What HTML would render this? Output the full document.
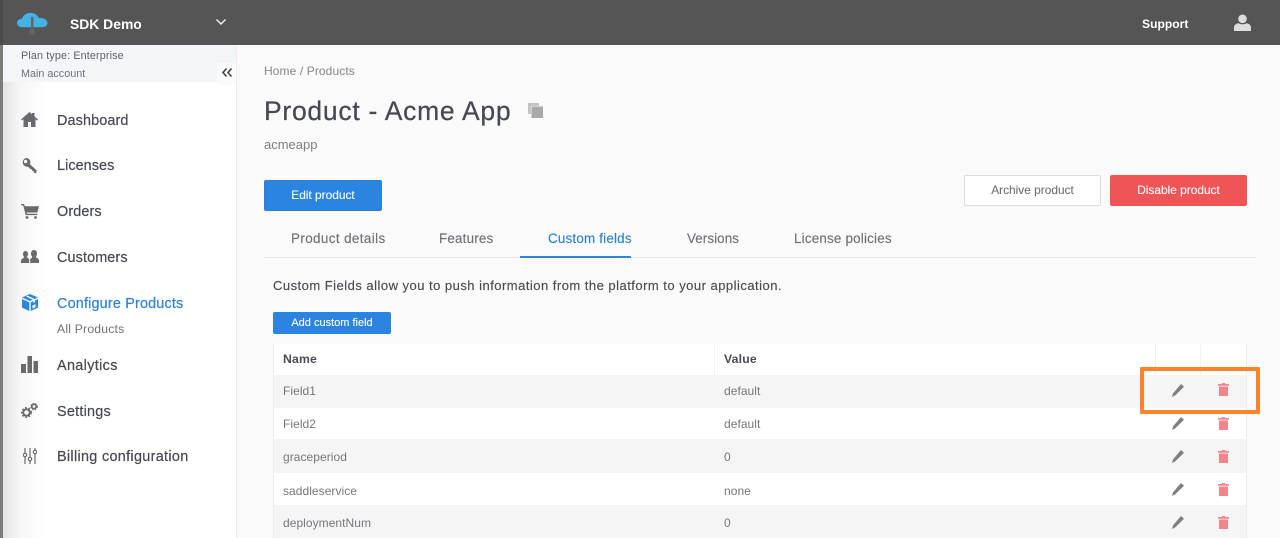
<!DOCTYPE html>
<html lang="en"><head><meta charset="utf-8"><title>Product - Acme App</title>
<style>
html,body{margin:0;padding:0;width:1280px;height:538px;overflow:hidden;background:#fafafa}
body{position:relative;font-family:"Liberation Sans",sans-serif;color:#464852}
.a,.t{position:absolute}
.t{white-space:nowrap;line-height:20px;height:20px}
svg{position:absolute;display:block}
.nav{font-size:14.4px;color:#464852;letter-spacing:.12px;left:57px;-webkit-text-stroke:.2px}
.tab{font-size:13.4px;color:#6f7177;top:229px;letter-spacing:.2px;-webkit-text-stroke:.15px}
.cell{font-size:12px;color:#75777c;letter-spacing:.05px}
.btn{position:absolute;box-sizing:border-box;border-radius:2px;text-align:center;font-size:11.9px;color:#fff;-webkit-text-stroke:.1px}
.row{position:absolute;left:273px;width:974px}
.i{fill:#6a6a6e}
</style></head><body>
<div class="a" style="left:0;top:45px;width:236px;height:493px;background:#fff;border-right:1px solid #ececec"></div>
<div class="a" style="left:3px;top:45px;width:45px;height:493px;background:linear-gradient(90deg,#e2e2e2,#f6f6f6 35%,#fff)"></div>
<div class="a" style="left:0;top:45px;width:3px;height:493px;background:#7b7b7b"></div>
<div class="a" style="left:3px;top:45px;width:233px;height:37px;background:#f3f6f9"></div>
<div class="a" style="left:217px;top:63px;width:19px;height:22px;background:#fafafa"></div>
<div class="a" style="left:0;top:0;width:1280px;height:45px;background:#555"></div>
<div class="a" style="left:0;top:0;width:3px;height:45px;background:#4a4a4a"></div>

<svg style="left:17px;top:12px" width="31" height="23" viewBox="0 0 31 23"><path transform="scale(1 .85)" fill="#45b2e4" d="M6 18C2.500 18 0 16 0 13c0-3 2.300-5 5-5 .7-4 4.500-7 8.500-7 3.800 0 7 2.300 8.200 6 4.800-.6 8.800 2.200 8.800 6 0 3-2.500 5-6 5z"/><path fill="#666" d="M14 5h2.500v12c1.200.5 1.800 1.500 1.800 2.600a3 3 0 0 1-6 0c0-1.100.6-2.100 1.700-2.600z"/></svg>
<span class="t" style="left:70px;top:14px;font-size:13.900px;font-weight:700;color:#fff">SDK Demo</span>
<svg style="left:215px;top:18px" width="12" height="9" viewBox="0 0 12 9"><path d="M1.500 1.500 6 6l4.500-4.500" fill="none" stroke="#eee" stroke-width="1.500"/></svg>
<span class="t" style="left:1142px;top:14px;font-size:12.100px;font-weight:700;color:#fff">Support</span>
<svg style="left:1234px;top:14px" width="17" height="18" viewBox="0 0 17 18"><circle cx="8.500" cy="4.800" r="4.300" fill="#ddd"/><path fill="#ddd" d="M0 17v-3.500C0 11 2 9.500 4.500 9.200 6.800 10.600 10.200 10.600 12.500 9.200 15 9.500 17 11 17 13.500V17z"/></svg>

<span class="t" style="left:21px;top:46px;font-size:10.800px;color:#5f6168;letter-spacing:.12px">Plan type: Enterprise</span>
<span class="t" style="left:21px;top:64px;font-size:10.800px;color:#6f7177;letter-spacing:0">Main account</span>
<svg style="left:221px;top:67px" width="12" height="11" viewBox="0 0 12 11"><path d="M5.500 1.500 2 5.500l3.500 4M10.500 1.500 7 5.500l3.500 4" fill="none" stroke="#444" stroke-width="1.600"/></svg>

<svg class="i" style="left:21px;top:112px" width="17" height="15" viewBox="0 0 17 15"><path d="M8.500 0 0 7.500 1 8.500l1.500-1.300V15h4.500v-5h3v5h4.500V7.200L16 8.500l1-1L13.500 4.500V1H11v1.300z"/></svg>
<span class="t nav" style="top:111px">Dashboard</span>

<svg class="i" style="left:22px;top:158px" width="15" height="16" viewBox="0 0 15 16"><path fill-rule="evenodd" d="M4.200 0a4.200 4.200 0 0 1 3.700 6.100l6.800 6.400-.6 2.800-2.300-.5-.2-1.800-1.500-.2-.2-1.500-1.500-.2-2.400-2.500A4.200 4.200 0 1 1 4.200 0zM3.600 1.800a1.700 1.700 0 1 0 0 3.400 1.700 1.700 0 0 0 0-3.400z"/></svg>
<span class="t nav" style="top:156px;letter-spacing:.07px">Licenses</span>

<svg class="i" style="left:21px;top:204px" width="18" height="15" viewBox="0 0 18 15"><path d="M0 0h3l.8 2.200H18l-1.600 6.300H5.600l.4 1.300h10.300v1.300H4.700L2.200 1.400H0z"/><circle cx="6" cy="13.500" r="1.400"/><circle cx="14.500" cy="13.500" r="1.400"/></svg>
<span class="t nav" style="top:202px">Orders</span>

<svg class="i" style="left:21px;top:250px" width="18" height="13" viewBox="0 0 18 13"><path d="M4.500 1C6 1 7 2.200 7 4c0 1.200-.5 2.300-1.100 3 .2.800 1.300 1.200 2.200 1.700V13H0v-2.500C0 9 2.600 8.500 3.200 7 2.500 6.300 2 5.200 2 4c0-1.800 1-3 2.500-3z"/><path d="M13 0c1.800 0 3 1.400 3 3.500 0 1.300-.5 2.500-1.200 3.300.4 1.200 3.200 1.700 3.200 3.700V13H9.200V9c.8-.5 1.900-1 2-2.200C10.500 6 10 4.800 10 3.500 10 1.400 11.200 0 13 0z"/></svg>
<span class="t nav" style="top:248px">Customers</span>

<svg style="left:22px;top:294px" width="16" height="17" viewBox="0 0 16 17"><path fill="#2b86dd" d="M8 0l8 3.500-8 3.500-8-3.500zM0 5l7.300 3.200V17L0 13.600zM16 5v8.600L8.700 17V8.200z"/><path fill="#fff" d="M4 2.500 11.500 6v3l1.500-.7v-3L5.700 1.700zM10.500 11.500l3-1.300v3l-3 1.300z"/></svg>
<span class="t nav" style="top:294px;color:#2f80d8;letter-spacing:.18px">Configure Products</span>
<span class="t" style="left:57px;top:319px;font-size:12.200px;color:#6f7177;letter-spacing:.2px">All Products</span>

<svg class="i" style="left:21px;top:356px" width="17" height="17" viewBox="0 0 17 17"><path d="M0 8h5v9H0zM6.500 0h4.500v17H6.500zM12.500 5H17v12h-4.500z"/></svg>
<span class="t nav" style="top:356px;letter-spacing:.35px">Analytics</span>

<svg style="left:21px;top:403px" width="17" height="15" viewBox="0 0 17 15"><circle cx="5.500" cy="9.500" r="3.300" fill="none" stroke="#6a6a6e" stroke-width="2"/><circle cx="5.500" cy="9.500" r="4.800" fill="none" stroke="#6a6a6e" stroke-width="1.300" stroke-dasharray="1.800 1.700"/><circle cx="13" cy="3.500" r="2.200" fill="none" stroke="#6a6a6e" stroke-width="1.600"/><circle cx="13" cy="3.500" r="3.300" fill="none" stroke="#6a6a6e" stroke-width="1.100" stroke-dasharray="1.400 1.400"/></svg>
<span class="t nav" style="top:402px;letter-spacing:.25px">Settings</span>

<svg style="left:23px;top:448px" width="14" height="16" viewBox="0 0 14 16" fill="none" stroke="#6a6a6e"><path stroke-width="1.200" d="M2 0v5M2 9v7M7 0v9M7 13v3M12 0v2M12 6v10"/><circle cx="2" cy="7" r="1.700" stroke-width="1.200"/><circle cx="7" cy="11" r="1.700" stroke-width="1.200"/><circle cx="12" cy="4" r="1.700" stroke-width="1.200"/></svg>
<span class="t nav" style="top:447px;letter-spacing:.32px">Billing configuration</span>

<span class="t" style="left:264px;top:61px;font-size:12px;color:#8d8f93;letter-spacing:.1px;-webkit-text-stroke:.1px">Home / Products</span>
<span class="t" style="left:264px;top:96px;height:30px;line-height:30px;font-size:26.500px;color:#464852;letter-spacing:.73px;-webkit-text-stroke:.25px">Product - Acme App</span>
<svg style="left:528px;top:103px" width="15" height="15" viewBox="0 0 15 15"><path fill="#c4c4c4" d="M0 0h11v3H3v8H0z"/><path fill="#a9a9a9" d="M3.500 3.500H15V15H3.500z"/></svg>
<span class="t" style="left:264px;top:135px;font-size:13px;color:#7b7d82">acmeapp</span>

<div class="btn" style="left:264px;top:180px;width:118px;height:31px;line-height:29px;background:#2b84e0;border:1px solid #2a7fd6">Edit product</div>
<div class="btn" style="left:964px;top:175px;width:137px;height:31px;line-height:29px;background:#fff;border:1px solid #dcdcdc;color:#6f7177">Archive product</div>
<div class="btn" style="left:1110px;top:175px;width:137px;height:31px;line-height:29px;background:#ef5456;border:1px solid #ef5456">Disable product</div>

<span class="t tab" style="left:291px;letter-spacing:.4px">Product details</span>
<span class="t tab" style="left:439px">Features</span>
<span class="t tab" style="left:548px;color:#2f80d0">Custom fields</span>
<span class="t tab" style="left:687px;letter-spacing:.08px">Versions</span>
<span class="t tab" style="left:794px">License policies</span>
<div class="a" style="left:264px;top:257px;width:992px;height:1px;background:#e6e6e6"></div>
<div class="a" style="left:520px;top:256px;width:111px;height:2px;background:#2f86d8"></div>

<span class="t" style="left:273px;top:276px;font-size:13px;color:#4a4c54;letter-spacing:.48px;-webkit-text-stroke:.15px">Custom Fields allow you to push information from the platform to your application.</span>
<div class="btn" style="left:273px;top:312px;width:118px;height:22px;line-height:23px;font-size:11px;background:#2b84e0">Add custom field</div>

<div class="row" style="top:344px;height:31px;background:#fff"></div>
<div class="row" style="top:375px;height:33px;background:#f5f5f5"></div>
<div class="row" style="top:408px;height:31px;background:#fff"></div>
<div class="row" style="top:439px;height:34px;background:#f5f5f5"></div>
<div class="row" style="top:473px;height:32px;background:#fff"></div>
<div class="row" style="top:505px;height:33px;background:#f5f5f5"></div>
<div class="a" style="left:273px;top:344px;width:1px;height:194px;background:#eee"></div>
<div class="a" style="left:1246px;top:344px;width:1px;height:194px;background:#eee"></div>
<div class="a" style="left:714px;top:344px;width:1px;height:31px;background:#f1f1f1"></div>
<div class="a" style="left:1155px;top:344px;width:1px;height:31px;background:#f1f1f1"></div>
<div class="a" style="left:1200px;top:344px;width:1px;height:31px;background:#f1f1f1"></div>

<span class="t" style="left:283px;top:349px;font-size:12.200px;font-weight:700;color:#4a4c54;letter-spacing:.2px">Name</span>
<span class="t" style="left:724px;top:349px;font-size:12.200px;font-weight:700;color:#4a4c54;letter-spacing:.2px">Value</span>
<span class="t cell" style="left:283px;top:381px">Field1</span><span class="t cell" style="left:724px;top:381px">default</span>
<span class="t cell" style="left:283px;top:414px">Field2</span><span class="t cell" style="left:724px;top:414px">default</span>
<span class="t cell" style="left:283px;top:447px">graceperiod</span><span class="t cell" style="left:724px;top:447px">0</span>
<span class="t cell" style="left:283px;top:481px">saddleservice</span><span class="t cell" style="left:724px;top:481px">none</span>
<span class="t cell" style="left:283px;top:513px">deploymentNum</span><span class="t cell" style="left:724px;top:513px">0</span>

<svg width="0" height="0" style="position:absolute"><defs>
<path id="pen" fill="#7f7f7f" d="M9 0 12 2.800 3.200 11.400 0 13 1 9.400z"/>
<path id="bin" fill="#ee868b" d="M3.500 1 4.200 0h2.600l.7 1H11v1.700H0V1zM1 3.500h9V13H1z"/>
</defs></svg>
<svg style="left:1172px;top:384px" width="12" height="13"><use href="#pen"/></svg>
<svg style="left:1218px;top:383px" width="11" height="13"><use href="#bin"/></svg>
<svg style="left:1172px;top:417px" width="12" height="13"><use href="#pen"/></svg>
<svg style="left:1218px;top:417px" width="11" height="13"><use href="#bin"/></svg>
<svg style="left:1172px;top:450px" width="12" height="13"><use href="#pen"/></svg>
<svg style="left:1218px;top:450px" width="11" height="13"><use href="#bin"/></svg>
<svg style="left:1172px;top:483px" width="12" height="13"><use href="#pen"/></svg>
<svg style="left:1218px;top:483px" width="11" height="13"><use href="#bin"/></svg>
<svg style="left:1172px;top:516px" width="12" height="13"><use href="#pen"/></svg>
<svg style="left:1218px;top:516px" width="11" height="13"><use href="#bin"/></svg>

<div class="a" style="left:1140px;top:367px;width:120px;height:47px;box-sizing:border-box;border:4px solid #f9842b;border-radius:1px"></div>
</body></html>
